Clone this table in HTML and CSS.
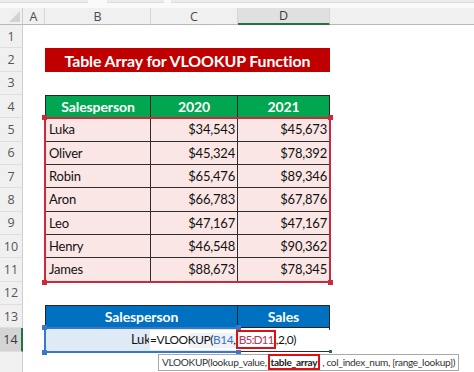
FILE: index.html
```html
<!DOCTYPE html>
<html>
<head>
<meta charset="utf-8">
<link rel="stylesheet" href="styles.css">
</head>
<body>
<div class="sheet">
  <div class="top"><span class="seg s1"></span><span class="seg s2"></span><span class="seg s3"></span></div>

  <div class="corner"><span class="tri"></span></div>
  <div class="ch cA">A</div>
  <div class="ch cB">B</div>
  <div class="ch cC">C</div>
  <div class="ch cD sel">D</div>
  <div class="ch cE last"></div>

  <div class="rh r1">1</div>
  <div class="rh r2">2</div>
  <div class="rh r3">3</div>
  <div class="rh r4">4</div>
  <div class="rh r5">5</div>
  <div class="rh r6">6</div>
  <div class="rh r7">7</div>
  <div class="rh r8">8</div>
  <div class="rh r9">9</div>
  <div class="rh r10">10</div>
  <div class="rh r11">11</div>
  <div class="rh r12">12</div>
  <div class="rh r13">13</div>
  <div class="rh r14 act">14</div>
  <div class="rh r15"></div>

  <div class="cell title r2 cBD">Table Array for VLOOKUP Function</div>

  <div class="cell th green r4 cB tl tt">Salesperson</div>
  <div class="cell th green r4 cC tt">2020</div>
  <div class="cell th green r4 cD tt">2021</div>

  <div class="cell td pink name r5 cB tl">Luka</div>
  <div class="cell td pink num r5 cC">$34,543</div>
  <div class="cell td pink num r5 cD">$45,673</div>

  <div class="cell td pink name r6 cB tl">Oliver</div>
  <div class="cell td pink num r6 cC">$45,324</div>
  <div class="cell td pink num r6 cD">$78,392</div>

  <div class="cell td pink name r7 cB tl">Robin</div>
  <div class="cell td pink num r7 cC">$65,476</div>
  <div class="cell td pink num r7 cD">$89,346</div>

  <div class="cell td pink name r8 cB tl">Aron</div>
  <div class="cell td pink num r8 cC">$66,783</div>
  <div class="cell td pink num r8 cD">$67,876</div>

  <div class="cell td pink name r9 cB tl">Leo</div>
  <div class="cell td pink num r9 cC">$47,167</div>
  <div class="cell td pink num r9 cD">$47,167</div>

  <div class="cell td pink name r10 cB tl">Henry</div>
  <div class="cell td pink num r10 cC">$46,548</div>
  <div class="cell td pink num r10 cD">$90,362</div>

  <div class="cell td pink name r11 cB tl">James</div>
  <div class="cell td pink num r11 cC">$88,673</div>
  <div class="cell td pink num r11 cD">$78,345</div>

  <div class="range red r5to11 cBD">
    <span class="h h-tl"></span><span class="h h-tr"></span><span class="h h-bl"></span><span class="h h-br"></span>
  </div>

  <div class="cell th blue r13 cBC tl tt">Salesperson</div>
  <div class="cell th blue r13 cD tt">Sales</div>

  <div class="cell td lblue center r14 cBC tl"><span class="clip">Luka</span></div>
  <div class="cell td r14 cD"></div>

  <div class="range bluer r14 cBC">
    <span class="h h-tl"></span><span class="h h-tr"></span><span class="h h-bl"></span><span class="h h-br"></span>
  </div>

  <div class="edit r14 cBD">
    <span class="wm"></span>
    <span class="f">=VLOOKUP(<span class="ref1">B14</span>,<span class="ref2">B5:D11</span>,2,0)</span>
  </div>
  <div class="fillh r14 cD"></div>

  <div class="tip r15 cCE">VLOOKUP(lookup_value, <b class="cur">table_array</b>, col_index_num, [range_lookup])</div>
</div>
</body>
</html>
```

FILE: styles.css
```css
html, body {
  margin: 0;
  padding: 0;
}
body {
  width: 474px;
  height: 372px;
  overflow: hidden;
  background: #ffffff;
  font-family: Lato, "Liberation Sans", sans-serif;
}
.sheet {
  display: grid;
  grid-template-columns: 23px 22px 106px 87px 92px 1fr;
  grid-template-rows: 8px 17px repeat(14, 23.333px) 1fr;
  width: 474px;
  height: 372px;
}

/* top strip */
.top {
  grid-row: 1;
  grid-column: 1 / -1;
  display: flex;
  align-items: flex-start;
  background: #fafafa;
}
.seg {
  height: 2px;
  background: #ececec;
  border-bottom: 1px solid #dcdcdc;
}
.s1 { width: 88px; }
.s2 { width: 57px; margin-left: 19px; }
.s3 { flex: 1; margin-left: 7px; }

/* headers */
.corner {
  grid-row: 2;
  grid-column: 1;
  background: #f0f0f0;
  border-right: 1px solid #cfcfcf;
  border-bottom: 1px solid #b8b8b8;
  display: flex;
  justify-content: flex-end;
  align-items: flex-end;
  padding: 0 2px 2px 0;
}
.tri {
  width: 0;
  height: 0;
  border-left: 11px solid transparent;
  border-bottom: 11px solid #d2d2d2;
}
.ch {
  grid-row: 2;
  display: flex;
  align-items: center;
  justify-content: center;
  background: #f0f0f0;
  color: #4a4a4a;
  font-family: "Open Sans", "Noto Sans", sans-serif;
  font-size: 12.5px;
  border-right: 1px solid #d6d6d6;
  border-bottom: 1px solid #b8b8b8;
}
.ch.sel {
  background: #e0e0e0;
  border-bottom: 2px solid #217346;
  color: #3c3c3c;
}
.ch.last { border-right: none; }

.rh {
  grid-column: 1;
  display: flex;
  align-items: center;
  justify-content: center;
  background: #f0f0f0;
  color: #555555;
  font-family: "Open Sans", "Noto Sans", sans-serif;
  font-size: 12.5px;
  border-right: 1px solid #cfcfcf;
  border-bottom: 1px solid #dedede;
}
.rh.act {
  background: #d4d4d4;
  border-right: 2px solid #217346;
  color: #3a3a3a;
}
.rh.r15 { border-bottom: none; }

/* grid placement */
.r1 { grid-row: 3; }
.r2 { grid-row: 4; }
.r3 { grid-row: 5; }
.r4 { grid-row: 6; }
.r5 { grid-row: 7; }
.r6 { grid-row: 8; }
.r7 { grid-row: 9; }
.r8 { grid-row: 10; }
.r9 { grid-row: 11; }
.r10 { grid-row: 12; }
.r11 { grid-row: 13; }
.r12 { grid-row: 14; }
.r13 { grid-row: 15; }
.r14 { grid-row: 16; }
.r15 { grid-row: 17; }
.r5to11 { grid-row: 7 / 14; }

.cA { grid-column: 2; }
.cB { grid-column: 3; }
.cC { grid-column: 4; }
.cD { grid-column: 5; }
.cE { grid-column: 6; }
.cBC { grid-column: 3 / 5; }
.cBD { grid-column: 3 / 6; }
.cCE { grid-column: 4 / 7; }

/* cells */
.cell {
  display: flex;
  align-items: center;
  white-space: nowrap;
  overflow: hidden;
  font-size: 13px;
  letter-spacing: -0.2px;
  color: #111111;
}
.title {
  background: #c00000;
  color: #ffffff;
  font-weight: 700;
  font-size: 15.9px;
  letter-spacing: -0.1px;
  justify-content: center;
  padding-top: 1px;
}
.th {
  color: #ffffff;
  font-weight: 700;
  font-size: 14px;
  letter-spacing: -0.1px;
  justify-content: center;
  border-right: 1px solid #262626;
  border-bottom: 1px solid #262626;
}
.green { background: #00a650; }
.blue { background: #0070c0; }
.td {
  border-right: 1px solid #2e2e2e;
  border-bottom: 1px solid #2e2e2e;
}
.tl { border-left: 1px solid #262626; }
.tt { border-top: 1px solid #262626; }
.pink { background: #fbe6e6; }
.lblue { background: #deebf7; }
.name { padding-left: 3px; }
.num { justify-content: flex-end; padding-right: 2px; }
.center { padding-left: 85px; }
.clip {
  display: block;
  width: 18px;
  overflow: hidden;
}

/* range finder overlays */
.range {
  position: relative;
  z-index: 3;
  margin: -1px;
  pointer-events: none;
}
.range.red { border: 2px solid #c92a3e; }
.range.bluer { border: 2px solid #3a77c8; }
.h {
  position: absolute;
  width: 5px;
  height: 5px;
}
.red .h { background: #c92a3e; }
.bluer .h { background: #3a77c8; }
.h-tl { left: -4px; top: -4px; }
.h-tr { right: -4px; top: -4px; }
.h-bl { left: -4px; bottom: -4px; }
.h-br { right: -4px; bottom: -4px; }

/* in-cell edit box */
.edit {
  justify-self: end;
  width: 181px;
  margin: 2px -1px 2px 0;
  background: #ffffff;
  z-index: 4;
  position: relative;
  display: flex;
  align-items: center;
  font-size: 11.9px;
  letter-spacing: -0.4px;
  color: #111111;
  white-space: nowrap;
}
.f { position: relative; z-index: 2; }
.ref1 { color: #3f74c8; }
.ref2 {
  color: #b03a5c;
  border: 2px solid #e01010;
  padding: 0 0 0 1px;
  letter-spacing: -0.9px;
}
.wm {
  position: absolute;
  left: 38px;
  top: 3px;
  width: 52px;
  height: 15px;
  border-radius: 3px;
  background: rgba(120, 150, 195, 0.12);
  z-index: 1;
}

.fillh {
  align-self: end;
  justify-self: end;
  width: 3px;
  height: 3px;
  margin: 0 -2px -1px 0;
  background: #217346;
  z-index: 5;
}

/* tooltip */
.tip {
  justify-self: start;
  align-self: start;
  margin: 2px 0 0 7px;
  height: 15px;
  display: flex;
  align-items: center;
  padding: 0 3px 0 3px;
  background: #ffffff;
  border: 1px solid #a8a8a8;
  font-family: Lato, "Liberation Sans", sans-serif;
  font-size: 10.1px;
  letter-spacing: -0.32px;
  color: #333333;
  white-space: nowrap;
  z-index: 6;
}
.cur {
  font-weight: 700;
  color: #222222;
  border: 2px solid #e01010;
  padding: 0 1px;
  margin: 0 2px 0 1px;
  line-height: 12px;
}
```
